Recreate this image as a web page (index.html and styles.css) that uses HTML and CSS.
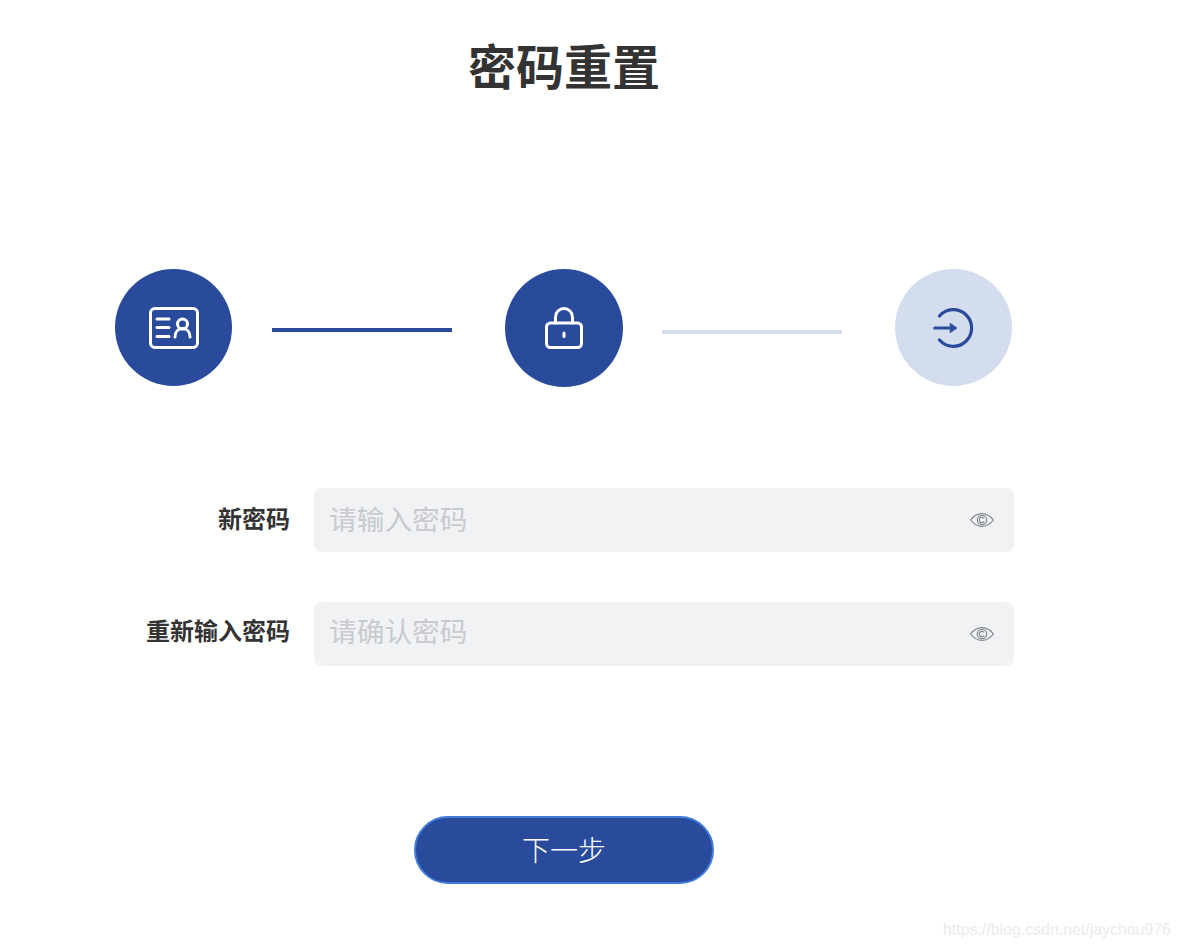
FILE: index.html
```html
<!DOCTYPE html>
<html lang="zh-CN">
<head>
  <meta charset="UTF-8" />
  <title>密码重置</title>
  <link rel="stylesheet" href="styles.css">
</head>
<body>
  <div class="page">
    <h1 class="title">密码重置</h1>

    <div class="steps">
      <div class="step active">
        <svg width="50" height="42" viewBox="0 0 50 42" fill="none" stroke="#fff" stroke-width="3" stroke-linecap="round" stroke-linejoin="round">
          <rect x="1.5" y="1.5" width="47" height="39" rx="4.5" />
          <path d="M8 12H20M8 20.500H20M8 29.500H20" />
          <circle cx="33.5" cy="17" r="5" />
          <path d="M26 30c0-5 3-8.500 7.500-8.500s7.500 3.500 7.500 8.500" />
        </svg>
      </div>
      <div class="line done"></div>
      <div class="step active middle">
        <svg width="38" height="42" viewBox="0 0 38 42" fill="none" stroke="#fff" stroke-width="3" stroke-linecap="round" stroke-linejoin="round">
          <rect x="1.5" y="16" width="35" height="24.5" rx="4" />
          <path d="M10.500 16V10a8.500 8.500 0 0 1 17 0v6" />
          <path d="M19 26v3.500" />
        </svg>
      </div>
      <div class="line todo"></div>
      <div class="step pending">
        <svg class="arrow" width="42" height="40" viewBox="0 0 42 40" fill="none" stroke="#2a4b9b" stroke-width="3.2" stroke-linecap="round" stroke-linejoin="round">
          <path d="M6.500 8A18.300 18.300 0 1 1 6.500 32" />
          <path d="M1.800 20H22" />
          <path d="M17.500 15.500L23.500 20L17.500 24.500Z" fill="#2a4b9b" stroke-width="1" />
        </svg>
      </div>
    </div>

    <form class="form">
      <div class="form-row first">
        <label class="form-label" for="pwd">新密码</label>
        <div class="field">
          <input id="pwd" type="password" placeholder="请输入密码">
          <svg class="eye" width="24" height="14" viewBox="0 0 24 14" fill="none" stroke="#84888f" stroke-width="1.2">
            <path d="M.6 7C3.600 3 7.500 .7 12 .7S20.400 3 23.400 7C20.400 11 16.500 13.300 12 13.300S3.600 11 .6 7Z" />
            <circle cx="12" cy="7" r="4.7" />
            <path d="M14.200 5.400A2.700 2.700 0 1 0 14.200 8.600" />
          </svg>
        </div>
      </div>
      <div class="form-row second">
        <label class="form-label" for="pwd2">重新输入密码</label>
        <div class="field">
          <input id="pwd2" type="password" placeholder="请确认密码">
          <svg class="eye" width="24" height="14" viewBox="0 0 24 14" fill="none" stroke="#84888f" stroke-width="1.2">
            <path d="M.6 7C3.600 3 7.500 .7 12 .7S20.400 3 23.400 7C20.400 11 16.500 13.300 12 13.300S3.600 11 .6 7Z" />
            <circle cx="12" cy="7" r="4.7" />
            <path d="M14.200 5.400A2.700 2.700 0 1 0 14.200 8.600" />
          </svg>
        </div>
      </div>
      <button class="next" type="button">下一步</button>
    </form>
  </div>
  <div class="watermark">https://blog.csdn.net/jaychou976</div>
</body>
</html>
```

FILE: styles.css
```css
:root {
  --primary: #2a4b9b;
  --primary-light: #d4ddee;
}

* {
  box-sizing: border-box;
}

body {
  margin: 0;
  background: #ffffff;
  color: #333333;
  font-family: "Noto Sans CJK SC", "Noto Sans", sans-serif;
}

.page {
  width: 1180px;
  height: 948px;
  overflow: hidden;
}

.title {
  margin: 0;
  padding-top: 30px;
  padding-right: 52px;
  text-align: center;
  font-size: 48px;
  line-height: 68px;
  font-weight: 700;
}

/* Steps */
.steps {
  display: flex;
  align-items: center;
  margin-top: 171px;
  padding-left: 115px;
}

.step {
  width: 117px;
  height: 117px;
  border-radius: 50%;
  display: flex;
  align-items: center;
  justify-content: center;
  flex-shrink: 0;
  align-self: flex-start;
}

.step.middle {
  width: 118px;
  height: 118px;
}

.step.active {
  background: var(--primary);
}

.step.pending {
  background: var(--primary-light);
}

.arrow {
  margin-left: 1px;
}

.line {
  width: 180px;
  height: 4px;
  margin-left: 39px;
  margin-right: 53px;
}

.line.done {
  background: var(--primary);
  margin-left: 40px;
  margin-top: 4px;
}

.line.todo {
  background: var(--primary-light);
  margin-top: 8px;
}

/* Form */
.form {
  margin-top: 101px;
}

.form-row {
  display: flex;
  align-items: center;
  margin-bottom: 50px;
}

.form-label {
  width: 290px;
  text-align: right;
  font-size: 24px;
  font-weight: 700;
  margin-right: 24px;
}

.form-row.first .form-label {
  margin-top: -6px;
}

.form-row.second .form-label {
  margin-top: -10px;
}

.field {
  width: 700px;
  height: 64px;
  background: #f1f2f4;
  border-radius: 8px;
  display: flex;
  align-items: center;
  padding: 0 20px 0 15px;
}

.field input {
  flex: 1;
  min-width: 0;
  border: none;
  outline: none;
  background: transparent;
  padding: 0;
  font-family: inherit;
  font-size: 27.7px;
  color: #333333;
}

.form-row.first input {
  padding-bottom: 4px;
}

.form-row.second input {
  padding-bottom: 8px;
}

.field input::placeholder {
  color: #c8cacf;
  opacity: 1;
}

.eye {
  flex-shrink: 0;
}

.next {
  display: block;
  width: 300px;
  height: 68px;
  margin: 150px 0 0 414px;
  padding: 0 0 2px;
  border: 2px solid #3f7cd8;
  border-radius: 34px;
  background: var(--primary);
  color: #ffffff;
  font-family: inherit;
  font-size: 28px;
  font-weight: 300;
  cursor: pointer;
}

.watermark {
  position: absolute;
  left: 943px;
  top: 919px;
  font-family: "Liberation Sans", Arial, sans-serif;
  font-size: 15.9px;
  line-height: 22px;
  color: #ebebeb;
  white-space: nowrap;
}
```
